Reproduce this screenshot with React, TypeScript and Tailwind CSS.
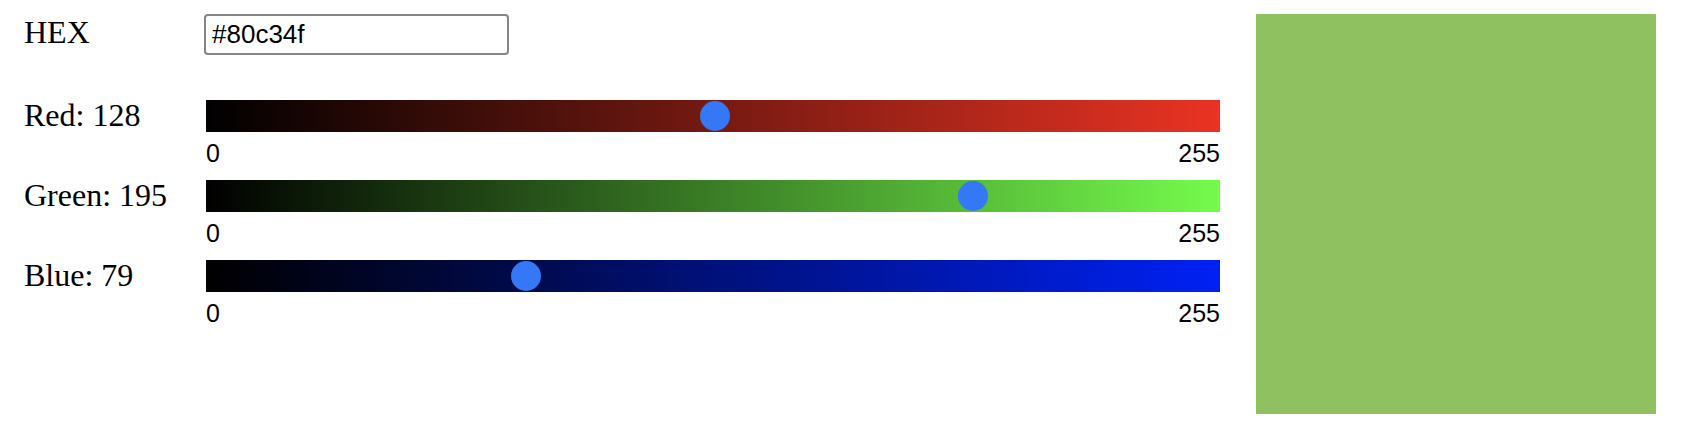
import { useState } from "react";

type Channel = "r" | "g" | "b";

const channels: { key: Channel; label: string; track: string }[] = [
  { key: "r", label: "Red", track: "bg-linear-to-r/srgb from-black to-[#ea3323]" },
  { key: "g", label: "Green", track: "bg-linear-to-r/srgb from-black to-[#75fb4c]" },
  { key: "b", label: "Blue", track: "bg-linear-to-r/srgb from-black to-[#0021f5]" },
];

const toHex = (c: Record<Channel, number>) =>
  "#" + [c.r, c.g, c.b].map((v) => v.toString(16).padStart(2, "0")).join("");

export default function App() {
  const [color, setColor] = useState<Record<Channel, number>>({ r: 128, g: 195, b: 79 });
  const [hex, setHex] = useState("#80c34f");

  const update = (key: Channel, value: number) => {
    const next = { ...color, [key]: value };
    setColor(next);
    setHex(toHex(next));
  };

  const onHex = (v: string) => {
    setHex(v);
    const m = /^#?([0-9a-f]{2})([0-9a-f]{2})([0-9a-f]{2})$/i.exec(v);
    if (m) setColor({ r: parseInt(m[1], 16), g: parseInt(m[2], 16), b: parseInt(m[3], 16) });
  };

  return (
    <div className="flex w-[1704px] h-[446px] bg-white pt-[14px] pl-[24px] text-black">
      {/* controls */}
      <div className="flex flex-col w-[1196px]">
        <div className="flex items-start">
          <span className="w-[180px] mt-[4px] text-[32px] leading-[28px] font-['Liberation_Serif',serif]">
            HEX
          </span>
          <input
            value={hex}
            onChange={(e) => onHex(e.target.value)}
            className="w-[305px] h-[41px] px-[6px] border-2 border-[#858585] rounded-[4px] text-[26px] font-['Liberation_Sans',Arial,sans-serif] outline-none"
          />
        </div>

        <div className="mt-[45px] flex flex-col">
          {channels.map((c) => (
            <div key={c.key} className="flex items-start h-[80px]">
              <span className="w-[182px] mt-[1px] text-[32px] leading-[28px] font-['Liberation_Serif',serif] whitespace-nowrap">
                {c.label}: {color[c.key]}
              </span>
              <div className="flex flex-col w-[1014px]">
                <input
                  type="range"
                  min={0}
                  max={255}
                  value={color[c.key]}
                  onChange={(e) => update(c.key, Number(e.target.value))}
                  className={`${c.track} block w-full h-[32px] m-0 appearance-none cursor-pointer [&::-webkit-slider-runnable-track]:h-[32px] [&::-webkit-slider-runnable-track]:bg-transparent [&::-webkit-slider-thumb]:appearance-none [&::-webkit-slider-thumb]:w-[30px] [&::-webkit-slider-thumb]:h-[30px] [&::-webkit-slider-thumb]:mt-[1px] [&::-webkit-slider-thumb]:rounded-full [&::-webkit-slider-thumb]:bg-[#3478f6] [&::-webkit-slider-thumb]:border-0`}
                />
                <div className="mt-[9px] flex justify-between text-[25px] leading-[25px] font-['Liberation_Sans',Arial,sans-serif]">
                  <span>0</span>
                  <span>255</span>
                </div>
              </div>
            </div>
          ))}
        </div>
      </div>

      {/* preview */}
      <div className="ml-[36px] w-[400px] h-[400px] bg-[#90c160]" />
    </div>
  );
}
